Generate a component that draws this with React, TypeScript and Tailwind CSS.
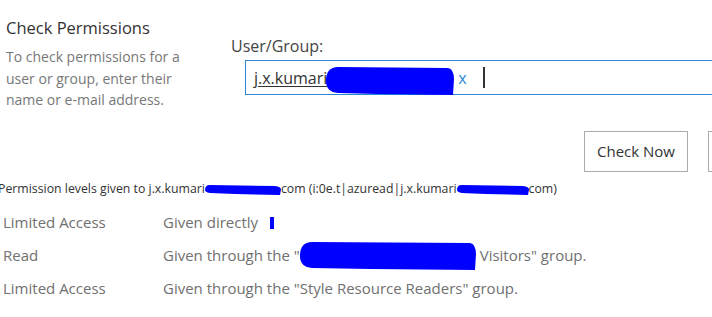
import React from "react";

function Scribble({ w, h, className = "" }: { w: number; h: number; className?: string }) {
  // hand-drawn redaction mark
  return (
    <svg width={w} height={h} viewBox={`0 0 ${w} ${h}`} className={`inline-block align-middle ${className}`}>
      <path
        d={`M${h * 0.4} 1 L${w - 6} 2 Q${w} 3 ${w} ${h * 0.45} L${w - 1} ${h - 1} L${w * 0.4} ${h - 2} L${h * 0.4} ${h - 3} Q0 ${h - 4} 0 ${h * 0.5} Q0 1 ${h * 0.4} 1 Z`}
        fill="#0000ff"
      />
    </svg>
  );
}

const rows = [
  { level: "Limited Access", how: "direct" },
  { level: "Read", how: "visitors" },
  { level: "Limited Access", how: "style" },
];

export default function App() {
  return (
    <div className="w-[712px] h-[317px] overflow-hidden bg-white font-['Open_Sans',sans-serif]">
      <div className="flex h-[108px]">
        <div className="w-[225px] shrink-0 pl-[6px] pt-[16px]">
          <h1 className="text-[16.5px] leading-[24px] text-[#333]">Check Permissions</h1>
          <p className="mt-[6px] w-[192px] text-[14px] leading-[21.5px] text-[#777]">
            To check permissions for a user or group, enter their name or e-mail address.
          </p>
        </div>
        <div className="flex-1 pt-[34px]">
          <label className="ml-[6px] block text-[16px] leading-[24px] text-[#444]">User/Group:</label>
          <div className="ml-[20px] -mr-[10px] mt-[2px] h-[35px] border border-[#2b88d8] flex items-center pl-[8px] text-[16px]">
            <span className="text-[#333] underline underline-offset-2">j.x.kumari</span>
            <Scribble w={128} h={30} className="-ml-[1px] mt-[6px]" />
            <span className="ml-[4px] text-[#2b88d8]">x</span>
            <span className="ml-[16px] w-[2px] h-[21px] bg-[#333]" />
          </div>
        </div>
      </div>

      <div className="flex gap-[20px] pl-[584px] mt-[23px]">
        <button className="shrink-0 w-[104px] h-[41px] border border-[#ababab] text-[15px] text-[#333]">Check Now</button>
        <button className="shrink-0 w-[104px] h-[41px] border border-[#ababab] text-[15px] text-[#333]">Cancel</button>
      </div>

      <div className="-ml-[2px] mt-[7px] text-[12.3px] leading-[20px] text-[#333] whitespace-nowrap">
        Permission levels given to j.x.kumari
        <Scribble w={76} h={12} />
        com (i:0e.t|azuread|j.x.kumari
        <Scribble w={72} h={12} />
        com)
      </div>

      <div className="mt-[7px] text-[15px] text-[#707070]">
        {rows.map((r, i) => (
          <div key={i} className="flex h-[33px] items-center">
            <div className="w-[163px] pl-[3px]">{r.level}</div>
            <div className="flex items-center whitespace-nowrap">
              {r.how === "direct" && (
                <>
                  Given directly
                  <span className="ml-[12px] w-[4px] h-[12px] bg-[#0000ff]" />
                </>
              )}
              {r.how === "visitors" && (
                <>
                  Given through the "
                  <Scribble w={176} h={30} />
                  <span className="ml-[4px]">Visitors" group.</span>
                </>
              )}
              {r.how === "style" && <>Given through the "Style Resource Readers" group.</>}
            </div>
          </div>
        ))}
      </div>
    </div>
  );
}
